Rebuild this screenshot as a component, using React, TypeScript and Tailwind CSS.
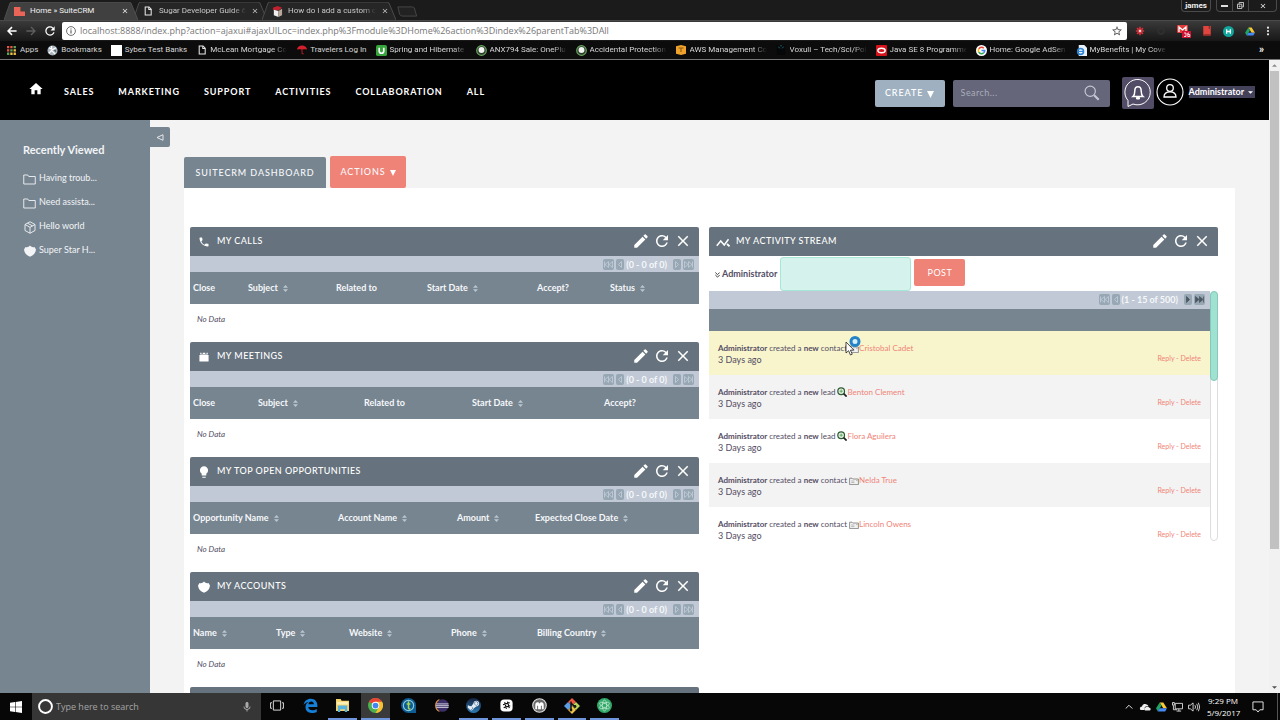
import React from "react";
import { MdEdit, MdRefresh, MdClose, MdPhone, MdLightbulb, MdHome, MdMic, MdStarBorder } from "react-icons/md";
import { FaSteamSymbol, FaSlack } from "react-icons/fa";

type IconProps = { className?: string };

/* ---------- Shared drawings ---------- */

const PageIcon = ({ className }: IconProps) => (
  <svg viewBox="0 0 10 12" className={className} fill="none" stroke="#e8e8e8" strokeWidth="1.3">
    <path d="M1.5 1h4.8L9 3.8V11H1.5z" />
    <path d="M6 1v3h3" />
  </svg>
);

const DriveIcon = ({ className }: IconProps) => (
  <svg viewBox="0 0 24 22" className={className}>
    <path d="M8 1h8l8 13h-8z" fill="#fcc934" />
    <path d="M8 1L0 14l4 7 8-13z" fill="#1fa463" />
    <path d="M8 14h16l-4 7H4z" fill="#4688f4" />
  </svg>
);

const ShieldIcon = ({ className }: IconProps) => (
  <svg viewBox="0 0 24 24" className={className} fill="currentColor">
    <path d="M12 1c3 3 5.500 4 9 2.800L24 9c-.8 7-4.500 11.500-12 14.500C4.500 20.500.8 16 0 9l3-5.200C6.500 5 9 4 12 1z" />
  </svg>
);

const FolderIcon = ({ className }: IconProps) => (
  <svg viewBox="0 0 26 22" className={className} fill="none" stroke="currentColor" strokeWidth="1.8">
    <path d="M1.500 20V2h8l2 3h13v15z" />
  </svg>
);

const CubeIcon = ({ className }: IconProps) => (
  <svg viewBox="0 0 24 26" className={className} fill="none" stroke="currentColor" strokeWidth="1.8" strokeLinejoin="round">
    <path d="M12 1.500l10 5.500v12l-10 5.500L2 19V7z" />
    <path d="M2 7l10 5.500L22 7M12 12.500v12M7 4.300l10 5.500" />
  </svg>
);

const CalendarIcon = ({ className }: IconProps) => (
  <svg viewBox="0 0 24 24" className={className} fill="currentColor">
    <path d="M1 7h22v15q0 1-1 1H2q-1 0-1-1z" />
    <path d="M3 2h3v3h3V2h6v3h3V2h3v4H3z" />
  </svg>
);

const ActivityIcon = ({ className }: IconProps) => (
  <svg viewBox="0 0 28 18" className={className} fill="none" stroke="currentColor" strokeWidth="3">
    <path d="M1.500 15.500L9.500 6l7 8L25 2.500" />
    <path d="M22 12l5 4.500" strokeWidth="3.5" />
  </svg>
);

const SortIcon = () => (
  <svg viewBox="0 0 10 14" className="h-[7px] w-[5px] shrink-0" fill="#b9c6d0">
    <path d="M5 0l5 5.500H0zM5 14L0 8.500h10z" />
  </svg>
);

const GoogleIcon = ({ className }: IconProps) => (
  <svg viewBox="0 0 24 24" className={className} fill="none" strokeWidth="3.4">
    <circle cx="12" cy="12" r="12" fill="#fff" />
    <path d="M17 7A7 7 0 0 0 6 8.500" stroke="#ea4335" />
    <path d="M6 8.500a7 7 0 0 0 0 7" stroke="#fbbc05" />
    <path d="M6 15.500A7 7 0 0 0 16.500 17.300" stroke="#34a853" />
    <path d="M12 12h7a7 7 0 0 1-2.500 5.300" stroke="#4285f4" />
  </svg>
);

const ChromeIcon = ({ className }: IconProps) => (
  <svg viewBox="0 0 24 24" className={className}>
    <circle cx="12" cy="12" r="12" fill="#4caf50" />
    <path d="M12 12L1.600 6A12 12 0 0 1 22.400 6z" fill="#ea4335" />
    <path d="M12 6h10.400A12 12 0 0 1 12 24l5.200-9z" fill="#fbc02d" />
    <circle cx="12" cy="12" r="6" fill="#fff" />
    <circle cx="12" cy="12" r="4.6" fill="#4285f4" />
  </svg>
);

const RingIcon = ({ className }: IconProps) => (
  <svg viewBox="0 0 24 24" className={className}>
    <circle cx="12" cy="12" r="10.5" fill="#2c3a2c" stroke="#69a85f" strokeWidth="2.5" />
    <circle cx="12" cy="11" r="6.5" fill="#f2f4f2" />
  </svg>
);

/* ---------- Browser ---------- */

const BrowserTab = ({ icon, title, active = false }: { icon: React.ReactNode; title: string; active?: boolean }) => (
  <div
    className={
      "relative flex h-[18px] w-[129px] shrink-0 items-center gap-[5px] pl-[9px] pr-1 " +
      (active ? "z-10 text-[#f2f2f2]" : "text-[#c8c8c8]")
    }
  >
    <svg viewBox="0 0 134 18" preserveAspectRatio="none" className="absolute inset-y-0 left-0 h-full w-[134px]">
      <path d="M0 18L6 1Q7 0 8 0H124Q126 0 127 1L134 18" fill={active ? "#404040" : "#262626"} stroke="#555" strokeWidth="0.8" />
    </svg>
    <span className="relative flex w-3 shrink-0 justify-center">{icon}</span>
    <span
      className={
        "relative shrink-0 whitespace-nowrap " +
        (active ? "" : "[mask-image:linear-gradient(to_right,black_85%,transparent)]")
      }
    >
      {title}
    </span>
    <button aria-label={`Close ${title}`} className="relative ml-auto">
      <MdClose className="size-2" />
    </button>
  </div>
);

const bookmarks: { title: string; icon: React.ReactNode; fade?: boolean }[] = [
  {
    title: "Apps",
    icon: (
      <svg viewBox="0 0 9 9" className="size-[9px]">
        <path d="M0 0h2.300v2.300H0zM3.300 0h2.300v2.300H3.300zM0 3.300h2.300v2.300H0z" fill="#e5564a" />
        <path d="M6.600 0h2.300v2.300H6.600zM3.300 3.300h2.300v2.300H3.300zM0 6.600h2.300v2.300H0z" fill="#5aa85a" />
        <path d="M6.600 3.300h2.300v2.300H6.600zM3.300 6.600h2.300v2.300H3.300zM6.600 6.600h2.300v2.300H6.600z" fill="#f0c04a" />
      </svg>
    ),
  },
  {
    title: "Bookmarks",
    icon: (
      <svg viewBox="0 0 12 12" className="size-[11px]">
        <circle cx="6" cy="6" r="5.5" fill="#a9b4bf" />
        <path d="M2 3l4 2 4-2M2 9l3-3 4 4M5 1v4" stroke="#fff" strokeWidth="1.3" fill="none" />
        <path d="M7 6l3-1v3z" fill="#55636f" />
      </svg>
    ),
  },
  { title: "Sybex Test Banks", icon: <span className="block size-[11px] bg-white" /> },
  { title: "McLean Mortgage Co", icon: <PageIcon className="h-[10px] w-2" />, fade: true },
  {
    title: "Travelers Log In",
    icon: (
      <svg viewBox="0 0 12 12" className="size-[10px]">
        <path d="M0 5.500A6 5 0 0 1 12 5.500L9 5 6 5.500 3 5z" fill="#d4202c" />
        <path d="M6 5v5.500h2" stroke="#d4202c" fill="none" />
      </svg>
    ),
  },
  {
    title: "Spring and Hibernate",
    icon: (
      <svg viewBox="0 0 12 12" className="size-[11px]">
        <rect width="12" height="12" rx="2" fill="#35a53c" />
        <path d="M3.500 3v3.500a2.500 2.500 0 0 0 5 0V3" stroke="#fff" strokeWidth="1.8" fill="none" />
      </svg>
    ),
    fade: true,
  },
  { title: "ANX794 Sale: OnePlus", icon: <RingIcon className="size-[11px]" />, fade: true },
  { title: "Accidental Protection", icon: <RingIcon className="size-[11px]" />, fade: true },
  {
    title: "AWS Management Co",
    icon: (
      <svg viewBox="0 0 12 12" className="size-[10px]">
        <path d="M0 1.500L6 0l6 1.500v9L6 12l-6-1.500z" fill="#f0a32c" />
        <path d="M3 3.500h6M6 3.500v5" stroke="#8a5a10" strokeWidth="1.3" />
      </svg>
    ),
    fade: true,
  },
  {
    title: "Voxuli – Tech/Sci/Polit",
    icon: (
      <svg viewBox="0 0 12 12" className="size-[10px]">
        <rect x="1" width="10" height="12" fill="#050709" />
        <path d="M3 2l1.500 2M9 2L7.500 4M5 1h2" stroke="#2d7a80" />
      </svg>
    ),
    fade: true,
  },
  {
    title: "Java SE 8 Programme",
    icon: (
      <svg viewBox="0 0 12 12" className="size-[11px]">
        <rect width="12" height="12" rx="1" fill="#d6131b" />
        <ellipse cx="6" cy="6" rx="4" ry="2.5" stroke="#fff" strokeWidth="1.6" fill="none" />
      </svg>
    ),
    fade: true,
  },
  { title: "Home: Google AdSen", icon: <GoogleIcon className="size-[11px]" />, fade: true },
  {
    title: "MyBenefits | My Cove",
    icon: (
      <svg viewBox="0 0 12 12" className="size-[11px]">
        <path d="M3 0h6l3 3v9H3z" fill="#e9f2fb" />
        <circle cx="5" cy="7" r="3.2" stroke="#2f86d6" strokeWidth="1.7" fill="none" />
        <path d="M2 7h6" stroke="#2f86d6" strokeWidth="1.2" />
      </svg>
    ),
    fade: true,
  },
];

const Browser = () => (
  <div className="shrink-0 bg-[#1b1b1b] font-[family-name:Roboto,sans-serif] text-[8px] leading-3 text-[#d6d6d6]">
    <div className="flex h-5 items-start justify-between">
      <div className="flex items-end self-end pl-1">
        <BrowserTab
          active
          title="Home » SuiteCRM"
          icon={
            <svg viewBox="0 0 12 12" className="size-[11px]">
              <path d="M0 1h7v5h5v5H0z" fill="#ea6557" />
            </svg>
          }
        />
        <BrowserTab title="Sugar Developer Guide 6" icon={<PageIcon className="h-[10px] w-2" />} />
        <BrowserTab
          title="How do I add a custom c"
          icon={
            <svg viewBox="0 0 12 12" className="size-[11px]">
              <path d="M1 2l5-2 5 2-4 3-6-1z" fill="#c3202f" />
              <path d="M2 4l5 1.500V12L2 10z" fill="#eee" />
              <path d="M7 5.500L11 3v7l-4 2z" fill="#b9a79a" />
            </svg>
          }
        />
        <button aria-label="New tab" className="ml-[5px] self-center">
          <svg viewBox="0 0 22 12" className="h-[11px] w-[22px]">
            <path d="M1 1h15q2 0 3 1l2.500 9H6q-2 0-3-2z" fill="#222" stroke="#4a4a4a" />
          </svg>
        </button>
      </div>
      <div className="flex h-3 items-stretch gap-[5px] pr-[3px] text-[#efefef]">
        <button className="w-[30px] rounded-b-sm border border-t-0 border-[#4a4a4a] font-bold leading-[10px]">james</button>
        <div className="flex w-[61px] items-stretch rounded-b-sm border border-t-0 border-[#4a4a4a]">
          <button aria-label="Minimize" className="flex flex-1 items-center justify-center">
            <span className="h-[2px] w-[7px] bg-[#ddd]" />
          </button>
          <button aria-label="Restore" className="flex flex-1 items-center justify-center border-x border-[#4a4a4a]">
            <svg viewBox="0 0 8 8" className="size-[7px]" fill="none" stroke="#ddd">
              <path d="M2.500 2V.5h5v5H6M.5 2.500h5v5h-5zM2.500 4.500h1v1h-1z" />
            </svg>
          </button>
          <button aria-label="Close" className="flex w-[27px] items-center justify-center">
            <MdClose className="size-2" />
          </button>
        </div>
      </div>
    </div>

    <div className="flex h-[21px] items-center border-t border-[#4a4a4a] bg-linear-to-b from-[#3a3a3a] to-[#181818] pl-[7px] pr-[10px]">
      <button aria-label="Back">
        <svg viewBox="0 0 12 12" className="size-[10px]" fill="none" stroke="#fff" strokeWidth="1.9">
          <path d="M11.500 6H1.500M6 1.300L1.300 6 6 10.700" />
        </svg>
      </button>
      <button aria-label="Forward" className="ml-[9px]">
        <svg viewBox="0 0 12 12" className="size-[10px]" fill="none" stroke="#5e5e5e" strokeWidth="1.6">
          <path d="M.5 6h10M6 1.300L10.700 6 6 10.700" />
        </svg>
      </button>
      <button aria-label="Reload" className="ml-[7px]">
        <MdRefresh className="size-[14px] text-white" />
      </button>
      <label className="ml-[5px] flex h-[18px] min-w-0 flex-1 items-center gap-1 rounded-[2px] bg-white px-1">
        <svg viewBox="0 0 12 12" className="size-[10px] shrink-0" fill="none" stroke="#555">
          <circle cx="6" cy="6" r="5.3" />
          <path d="M6 5.200V9M6 3v1.200" strokeWidth="1.3" />
        </svg>
        <input
          aria-label="Address"
          readOnly
          value="localhost:8888/index.php?action=ajaxui#ajaxUILoc=index.php%3Fmodule%3DHome%26action%3Dindex%26parentTab%3DAll"
          className="min-w-0 flex-1 bg-transparent font-[family-name:'Open_Sans',sans-serif] text-[9px] text-[#777] outline-none"
        />
        <MdStarBorder className="size-[12px] text-[#555]" />
      </label>
      <div className="flex items-center gap-[11px] pl-2">
        <svg viewBox="0 0 12 12" className="size-[10px]" stroke="#d5303a" strokeWidth="2">
          <path d="M6 1v10M1 6h10M2.500 2.500l7 7M9.500 2.500l-7 7" />
          <circle cx="6" cy="6" r="1" fill="#fff" stroke="#fff" strokeWidth="1" />
        </svg>
        <svg viewBox="0 0 12 12" className="size-[10px]" fill="none" stroke="#303030" strokeWidth="2">
          <circle cx="6" cy="6" r="3.5" />
        </svg>
        <svg viewBox="0 0 14 14" className="size-[14px]">
          <rect width="11" height="8" y="1" rx="1" fill="#e03a3a" />
          <path d="M2 8V3l3.500 3L9 3v5" stroke="#fff" strokeWidth="1.3" fill="none" />
          <rect x="5" y="7" width="9" height="7" fill="#cf1030" />
          <path d="M7 9h2v3.500H7M11.800 9h-1v3.500h2v-2h-2" stroke="#fff" strokeWidth="0.8" fill="none" />
        </svg>
        <svg viewBox="0 0 12 12" className="size-[10px]">
          <path d="M1.500 0h9v11h-9z" fill="#e0463f" />
          <path d="M1.500 10h9v2h-9zM8 0h1.500v4L8 3z" fill="#8f2a26" />
        </svg>
        <svg viewBox="0 0 12 12" className="size-[11px]">
          <circle cx="6" cy="6" r="6" fill="#12a59c" />
          <path d="M4 3.500v5M8 3.500v5M4 6h4" stroke="#fff" strokeWidth="1.4" />
        </svg>
        <DriveIcon className="h-[9px] w-[10px]" />
        <svg viewBox="0 0 4 12" className="h-[10px] w-1" fill="#eee">
          <circle cx="2" cy="2" r="1.3" />
          <circle cx="2" cy="6" r="1.3" />
          <circle cx="2" cy="10" r="1.3" />
        </svg>
      </div>
    </div>

    <nav aria-label="Bookmarks" className="flex h-[19px] items-center gap-[9px] border-b border-[#777] bg-[#0c0c0c] pl-[6px] pr-4">
      {bookmarks.map((b) => (
        <a key={b.title} href="#" className="flex shrink-0 items-center gap-[3px]">
          <span className="flex w-[11px] justify-center">{b.icon}</span>
          <span
            className={
              "block whitespace-nowrap " +
              (b.fade ? "w-[77px] [mask-image:linear-gradient(to_right,black_82%,transparent)]" : "")
            }
          >
            {b.title}
          </span>
        </a>
      ))}
      <button aria-label="More bookmarks" className="ml-auto text-[10px] font-bold text-white">
        »
      </button>
    </nav>
  </div>
);

/* ---------- Application header ---------- */

const menu = ["SALES", "MARKETING", "SUPPORT", "ACTIVITIES", "COLLABORATION", "ALL"];

const Header = () => (
  <header className="flex h-[60px] shrink-0 items-center bg-black pl-7 pr-[14px] pt-[6px] text-white">
    <a href="#" aria-label="Home" className="mr-5 pb-2">
      <MdHome className="size-4" />
    </a>
    <nav className="flex gap-6 pb-[3px] text-[9px] font-bold leading-4 tracking-widest">
      {menu.map((m) => (
        <a key={m} href="#">
          {m}
        </a>
      ))}
    </nav>
    <button className="ml-auto flex h-[27px] w-[70px] items-center justify-center gap-1 rounded-[2px] bg-[#9fb1c0] text-[9px] font-medium tracking-widest">
      CREATE
      <svg viewBox="0 0 8 8" className="mt-[2px] size-[7px]" fill="#fff">
        <path d="M0 0h8L4 8z" />
      </svg>
    </button>
    <div className="ml-2 flex h-[27px] w-[157px] items-center rounded-[2px] bg-[#65667a] px-2">
      <input
        aria-label="Search"
        placeholder="Search..."
        className="min-w-0 flex-1 bg-transparent text-[9px] tracking-wider outline-none placeholder:text-[#a9adba]"
      />
      <button aria-label="Run search" className="mr-[2px]">
        <svg viewBox="0 0 18 18" className="size-4" fill="none" stroke="#c5cad6">
          <circle cx="7" cy="7" r="5.8" strokeWidth="1.3" />
          <path d="M11.500 11.500l5 5" strokeWidth="2.4" />
        </svg>
      </button>
    </div>
    <button aria-label="Notifications" className="ml-3 flex size-8 items-center justify-center rounded-[2px] bg-[#524c66]">
      <svg viewBox="0 0 30 30" className="size-[30px]" fill="none" stroke="#fff">
        <path d="M5 28.500V22.500A12.700 12.700 0 1 1 10 26z" strokeWidth="1" />
        <path d="M10 18.500c1.800-1.500 1.800-3 1.800-5.500 0-2.500 1.200-4.200 3.200-4.200s3.200 1.700 3.200 4.200c0 2.500 0 4 1.800 5.500z" strokeWidth="1.5" />
        <path d="M13.500 19.500h3v1.500h-3z" fill="#fff" />
      </svg>
    </button>
    <button aria-label="Profile" className="ml-[2px] pb-[2px]">
      <svg viewBox="0 0 28 28" className="size-7" fill="none" stroke="#fff">
        <circle cx="14" cy="14" r="13" strokeWidth="1.1" />
        <circle cx="14" cy="10" r="3.3" strokeWidth="1.3" />
        <path d="M8 19c0-3.500 2.500-5.200 6-5.200s6 1.700 6 5.200z" strokeWidth="1.3" />
      </svg>
    </button>
    <button className="mb-[2px] ml-[5px] flex h-3 items-center gap-1 bg-[#44415a] pr-[2px] text-[9px] font-bold leading-3">
      Administrator
      <svg viewBox="0 0 6 3" className="h-[3px] w-[5px]" fill="#fff">
        <path d="M0 0h6L3 3z" />
      </svg>
    </button>
  </header>
);

/* ---------- Sidebar ---------- */

const recent = [
  { label: "Having troub...", icon: <FolderIcon className="h-[11px] w-[13px]" /> },
  { label: "Need assista...", icon: <FolderIcon className="h-[11px] w-[13px]" /> },
  { label: "Hello world", icon: <CubeIcon className="h-[13px] w-3" /> },
  { label: "Super Star H...", icon: <ShieldIcon className="size-3" /> },
];

const Sidebar = () => (
  <aside className="w-[150px] shrink-0 bg-[#778591] pl-[23px] pt-[22px] text-[#f2f4f6]">
    <h2 className="text-[11px] font-bold leading-[15px]">Recently Viewed</h2>
    <ul className="mt-[9px] text-[9px]">
      {recent.map((r) => (
        <li key={r.label}>
          <a href="#" className="flex h-6 items-center gap-[3px]">
            <span className="flex w-[13px] justify-center pt-[2px]">{r.icon}</span>
            {r.label}
          </a>
        </li>
      ))}
    </ul>
  </aside>
);

/* ---------- Dashlets ---------- */

const PagerButton = ({ label, on, wide, flip }: { label: string; on?: boolean; wide?: boolean; flip?: boolean }) => (
  <button
    aria-label={label}
    disabled={!on}
    className={
      "flex h-[11px] items-center justify-center rounded-[2px] bg-[#98a7b4] " + (wide ? "w-[11px]" : "w-2")
    }
  >
    <svg
      viewBox={wide ? "0 0 9 7" : "0 0 4 7"}
      className={(wide ? "h-[7px] w-[9px]" : "h-[7px] w-1") + (flip ? " rotate-180" : "")}
      fill={on ? "#4b5863" : "none"}
      stroke={on ? "#4b5863" : "#c3ced8"}
      strokeWidth="0.8"
    >
      {wide ? <path d="M.5 .5L4 3.500 .5 6.500zM4.500 .5L8 3.500 4.500 6.500zM8.500 .5v6" /> : <path d="M.5 .5L3.500 3.500 .5 6.500z" />}
    </svg>
  </button>
);

const Pager = ({ text, more = false }: { text: string; more?: boolean }) => (
  <div
    className={
      "flex items-center justify-end bg-[#c0c9d5] pr-[5px] text-[9px] font-bold text-[#f6f8fa] " +
      (more ? "h-[18px] pb-[2px]" : "h-4")
    }
  >
    <div className="flex items-center gap-[2px]">
      <PagerButton label="First page" wide flip />
      <PagerButton label="Previous page" flip />
      <span className="mr-1 whitespace-nowrap leading-[11px]">{text}</span>
      <PagerButton label="Next page" on={more} />
      <PagerButton label="Last page" wide on={more} />
    </div>
  </div>
);

const PanelHeader = ({ icon, title }: { icon: React.ReactNode; title: string }) => (
  <div className="flex h-[29px] items-center rounded-t-[2px] bg-[#66727d] pb-px pl-[6px] pr-[7px] text-white">
    <span className="mr-[6px] flex w-[15px] justify-center pt-[2px]">{icon}</span>
    <h3 className="text-[9px] font-medium leading-4 tracking-wider">{title}</h3>
    <div className="ml-auto flex gap-[3px]">
      <button aria-label={`Edit ${title}`}>
        <MdEdit className="size-[18px]" />
      </button>
      <button aria-label={`Refresh ${title}`}>
        <MdRefresh className="size-[18px]" />
      </button>
      <button aria-label={`Remove ${title}`}>
        <MdClose className="size-[18px]" />
      </button>
    </div>
  </div>
);

type Column = { name: string; width: string; sort?: boolean };

const Dashlet = ({ icon, title, columns }: { icon: React.ReactNode; title: string; columns: Column[] }) => (
  <section>
    <PanelHeader icon={icon} title={title} />
    <Pager text="(0 - 0 of 0)" />
    <table className="w-full table-fixed text-left">
      <thead className="bg-[#778591] text-[9px] text-[#f6f8fa]">
        <tr className="h-8">
          {columns.map((c) => (
            <th key={c.name} scope="col" className={"pl-[3px] font-bold " + c.width}>
              <span className="flex items-center gap-[5px] whitespace-nowrap">
                {c.name}
                {c.sort && <SortIcon />}
              </span>
            </th>
          ))}
        </tr>
      </thead>
      <tbody>
        <tr className="h-[38px]">
          <td colSpan={columns.length} className="pb-2 pl-[7px] align-middle text-[8px] italic leading-3 text-[#534d64]">
            No Data
          </td>
        </tr>
      </tbody>
    </table>
  </section>
);

const dashlets: { title: string; icon: React.ReactNode; columns: Column[] }[] = [
  {
    title: "MY CALLS",
    icon: <MdPhone className="size-3" />,
    columns: [
      { name: "Close", width: "w-[55px]" },
      { name: "Subject", width: "w-[88px]", sort: true },
      { name: "Related to", width: "w-[91px]" },
      { name: "Start Date", width: "w-[110px]", sort: true },
      { name: "Accept?", width: "w-[73px]" },
      { name: "Status", width: "w-auto", sort: true },
    ],
  },
  {
    title: "MY MEETINGS",
    icon: <CalendarIcon className="size-[10px]" />,
    columns: [
      { name: "Close", width: "w-[65px]" },
      { name: "Subject", width: "w-[106px]", sort: true },
      { name: "Related to", width: "w-[108px]" },
      { name: "Start Date", width: "w-[132px]", sort: true },
      { name: "Accept?", width: "w-auto" },
    ],
  },
  {
    title: "MY TOP OPEN OPPORTUNITIES",
    icon: <MdLightbulb className="size-[14px]" />,
    columns: [
      { name: "Opportunity Name", width: "w-[145px]", sort: true },
      { name: "Account Name", width: "w-[119px]", sort: true },
      { name: "Amount", width: "w-[78px]", sort: true },
      { name: "Expected Close Date", width: "w-auto", sort: true },
    ],
  },
  {
    title: "MY ACCOUNTS",
    icon: <ShieldIcon className="size-3" />,
    columns: [
      { name: "Name", width: "w-[83px]", sort: true },
      { name: "Type", width: "w-[73px]", sort: true },
      { name: "Website", width: "w-[102px]", sort: true },
      { name: "Phone", width: "w-[86px]", sort: true },
      { name: "Billing Country", width: "w-auto", sort: true },
    ],
  },
];

const feed = [
  { kind: "contact", name: "Cristobal Cadet" },
  { kind: "lead", name: "Benton Clement" },
  { kind: "lead", name: "Flora Aguilera" },
  { kind: "contact", name: "Nelda True" },
  { kind: "contact", name: "Lincoln Owens" },
];

const KindIcon = ({ kind }: { kind: string }) =>
  kind === "lead" ? (
    <svg viewBox="0 0 12 12" className="ml-[2px] mt-px size-[10px]">
      <circle cx="5" cy="5" r="4" fill="#e8f2e4" stroke="#2c5d33" strokeWidth="1.5" />
      <path d="M3 5h4M5 3v4" stroke="#4f9a55" />
      <path d="M8 8l3.500 3.500" stroke="#222" strokeWidth="2" />
    </svg>
  ) : (
    <svg viewBox="0 0 12 10" className="ml-[2px] mt-[2px] h-2 w-[10px]" fill="#f2f2f2" stroke="#777">
      <path d="M.5 9.500v-8h3l1 1h7v7z" />
      <path d="M2.500 5h4M2.500 7h4M8.500 4.500h2" stroke="#999" strokeWidth="0.8" />
    </svg>
  );

const BusyPointer = () => (
  <svg viewBox="0 0 16 20" className="pointer-events-none absolute -left-[2px] -top-[7px] h-5 w-4">
    <circle cx="10" cy="5.5" r="4" fill="#d8ecf9" stroke="#2383c6" strokeWidth="3" />
    <path d="M1 6v11l2.600-2.300L5.400 19l1.900-.8-1.900-4L8.800 14z" fill="#fff" stroke="#222" strokeWidth="0.8" />
  </svg>
);

const ActivityStream = () => (
  <section className="text-[#534d64]">
    <PanelHeader icon={<ActivityIcon className="h-[9px] w-[14px]" />} title="MY ACTIVITY STREAM" />
    <form className="flex h-[35px] items-center pl-[6px]">
      <svg viewBox="0 0 7 8" className="mr-[2px] mt-[2px] h-[6px] w-[5px]" fill="none" stroke="#333">
        <path d="M.5 .5L3.500 3.500 6.500 .5M.5 4L3.500 7 6.500 4" strokeWidth="1.3" />
      </svg>
      <label htmlFor="status" className="mr-[3px] text-[9px] font-bold">
        Administrator
      </label>
      <input id="status" className="h-[34px] w-[131px] rounded-[3px] border border-[#a5e8d6] bg-[#d6f2ec] px-2 text-[9px] outline-none" />
      <button type="button" className="mb-[2px] ml-[3px] h-[27px] w-[51px] rounded-[2px] bg-[#f08377] text-[9px] tracking-wider text-white">
        POST
      </button>
    </form>
    <div className="flex h-[250px]">
      <div className="min-w-0 flex-1 overflow-hidden">
        <Pager text="(1 - 15 of 500)" more />
        <div className="h-[22px] bg-[#778591]" />
        <ul>
          {feed.map((f, i) => (
            <li
              key={f.name}
              className={
                "flex h-11 items-center justify-between pl-[9px] pr-[9px] pt-px " +
                (i === 0 ? "bg-[#f8f5cd]" : i % 2 ? "bg-[#f3f3f3]" : "bg-white")
              }
            >
              <div>
                <p className="flex items-center text-[8px] leading-3">
                  <span>
                    <b>Administrator</b> created a <b>new</b> {f.kind}
                  </span>
                  <span className="relative">
                    <KindIcon kind={f.kind} />
                    {i === 0 && <BusyPointer />}
                  </span>
                  <a href="#" className="text-[#f08377]">
                    {f.name}
                  </a>
                </p>
                <p className="text-[9px] leading-3">3 Days ago</p>
              </div>
              <p className="pt-[9px] text-[7px] leading-3 text-[#f08377]">
                <a href="#">Reply</a> - <a href="#">Delete</a>
              </p>
            </li>
          ))}
        </ul>
      </div>
      <div className="w-2 shrink-0 rounded-full border border-[#ddd] bg-white">
        <div className="-mx-px -mt-px h-[90px] rounded-full border border-[#86c9b8] bg-[#9fe2d1]" />
      </div>
    </div>
  </section>
);

const Dashboard = () => (
  <main className="flex min-h-0 min-w-0 flex-1 bg-[#f3f3f3]">
    <button aria-label="Collapse sidebar" className="mt-[7px] flex h-5 w-5 shrink-0 items-center justify-center rounded-r-[2px] bg-[#778591]">
      <svg viewBox="0 0 8 7" className="h-[7px] w-2" fill="none" stroke="#e3e7ea">
        <path d="M7 .7v5.600L1 3.500z" />
      </svg>
    </button>
    <div className="ml-[14px] mr-[34px] flex min-w-0 flex-1 flex-col pt-9">
      <div className="flex items-end gap-1 text-[9px] font-medium tracking-widest text-[#f6f8fa]">
        <button className="h-[31px] w-[142px] rounded-t-[2px] bg-[#778591]">SUITECRM DASHBOARD</button>
        <button className="flex h-8 w-[76px] items-center justify-center gap-1 rounded-[2px] bg-[#f08377]">
          ACTIONS
          <svg viewBox="0 0 8 8" className="mt-[2px] size-[6px]" fill="#fff">
            <path d="M0 0h8L4 8z" />
          </svg>
        </button>
      </div>
      <div className="grid min-h-0 flex-1 grid-cols-2 items-start gap-[10px] overflow-hidden bg-white pl-[6px] pr-[17px] pt-[39px]">
        <div>
          {dashlets.map((d) => (
            <Dashlet key={d.title} {...d} />
          ))}
          <div className="h-[29px] rounded-t-[2px] bg-[#66727d]" />
        </div>
        <ActivityStream />
      </div>
    </div>
  </main>
);

const Scrollbar = () => (
  <div className="flex w-[11px] shrink-0 flex-col items-center justify-between bg-[#f1f1f1] py-1">
    <svg viewBox="0 0 6 3" className="h-[3px] w-[5px] shrink-0" fill="#8a8a8a">
      <path d="M0 3h6L3 0z" />
    </svg>
    <div className="mt-1 h-[478px] w-[9px] shrink-0 bg-[#c1c1c1]" />
    <div className="flex-1" />
    <svg viewBox="0 0 6 3" className="h-[3px] w-[5px] shrink-0" fill="#505050">
      <path d="M0 0h6L3 3z" />
    </svg>
  </div>
);

/* ---------- Taskbar ---------- */

const tasks: { name: string; icon: React.ReactNode; open?: boolean; active?: boolean }[] = [
  {
    name: "Task view",
    icon: (
      <svg viewBox="0 0 15 12" className="h-[11px] w-[14px]" fill="none" stroke="#eee">
        <path d="M3.500 1h8v10h-8zM2 3H.5v6H2M13 3h1.500v6H13" />
      </svg>
    ),
  },
  {
    name: "Edge",
    icon: (
      <svg viewBox="0 0 24 24" className="size-[15px]" fill="#1680d8">
        <path d="M1 11C2 4.500 6.500 1 12.500 1 19 1 23 5.500 23 12v2.500H8.500c.2 3.500 3 5 6.500 5 2.700 0 5-.8 7-2v5C20 23.500 17 24 14 24 7.500 24 4 20 4 14.500c0-3.500 1.800-6.300 4.800-8C5.500 7 3 8.500 1 11zm7.700-1h8.600c0-2.800-1.500-4.300-4.200-4.300-2.500 0-4 1.600-4.400 4.300z" />
      </svg>
    ),
  },
  {
    name: "File Explorer",
    open: true,
    icon: (
      <svg viewBox="0 0 16 14" className="h-[13px] w-[15px]">
        <path d="M1 0h5l1 2h8v11H1z" fill="#f5d36b" />
        <path d="M2 3h12v3H2z" fill="#fbeeb5" />
        <path d="M3 7h10v7h-2.500v-3h-5v3H3z" fill="#55b1e0" />
      </svg>
    ),
  },
  { name: "Chrome", open: true, active: true, icon: <ChromeIcon className="size-[15px]" /> },
  {
    name: "TextPad",
    icon: (
      <svg viewBox="0 0 16 16" className="size-[15px]">
        <path d="M8 0a8 8 0 0 1 8 8v8H8A8 8 0 0 1 8 0z" fill="#0e5c94" />
        <circle cx="8" cy="8" r="5.5" fill="none" stroke="#8cc9dd" strokeWidth="1.2" />
        <path d="M8 3.500v7q0 1.500 2 1M6 6.500h4" stroke="#a8d64c" strokeWidth="1.6" fill="none" />
      </svg>
    ),
  },
  {
    name: "Eclipse",
    icon: (
      <svg viewBox="0 0 16 16" className="size-[15px]">
        <path d="M6 1a7.500 7.500 0 0 0 0 14L3.500 8z" fill="#ee9a3a" />
        <circle cx="9" cy="8" r="6.7" fill="#3a2f66" />
        <path d="M2.500 6.300h13M2.200 8.200h13.600M2.500 10h13" stroke="#e8e6f2" strokeWidth="0.9" />
      </svg>
    ),
  },
  {
    name: "Steam",
    open: true,
    icon: (
      <span className="flex size-[15px] items-center justify-center rounded-full bg-linear-to-b from-[#13233f] to-[#2d7db5]">
        <FaSteamSymbol className="size-[13px] text-[#e6eef5]" />
      </span>
    ),
  },
  {
    name: "Slack",
    open: true,
    icon: (
      <svg viewBox="0 0 16 16" className="size-[15px]">
        <rect x="1.5" y="1.5" width="13" height="13" rx="4" fill="#fff" />
        <path d="M6 4.500l2 7M9 3.800l2 7M4.300 7l7-2M5 10.300l7-2" stroke="#111" strokeWidth="1.3" fill="none" />
      </svg>
    ),
  },
  {
    name: "MAMP",
    open: true,
    icon: (
      <svg viewBox="0 0 16 16" className="size-[15px]">
        <circle cx="8" cy="8" r="7.2" fill="#6a6a6a" stroke="#ddd" strokeWidth="1.2" />
        <path d="M3.500 12V7.500C3.500 4 7 4 8 6c1-2 4.500-2 4.500 1.500V12h-2V8.500q-.5-1-1 0V12h-3V8.500q-.5-1-1 0V12z" fill="#fff" />
      </svg>
    ),
  },
  {
    name: "Git",
    open: true,
    icon: (
      <svg viewBox="0 0 16 16" className="size-4">
        <path d="M8 0l4 4-4 4-4-4z" fill="#ee5a43" />
        <path d="M4 4l4 4-4 4-4-4z" fill="#5c9ce0" />
        <path d="M12 4l4 4-4 4-4-4z" fill="#b8d65b" />
        <path d="M8 8l4 4-4 4-4-4z" fill="#f2c448" />
        <path d="M7 3.500v9M7 5l4 4" stroke="#151515" strokeWidth="1.5" />
        <circle cx="7" cy="12" r="1.4" fill="#151515" />
        <circle cx="11" cy="8.5" r="1.4" fill="#151515" />
      </svg>
    ),
  },
  {
    name: "Atom",
    open: true,
    icon: (
      <svg viewBox="0 0 16 16" className="size-[15px]">
        <circle cx="8" cy="8" r="8" fill="#32a869" />
        <g fill="none" stroke="#d3f0df" strokeWidth="0.7">
          <ellipse cx="8" cy="8" rx="2.3" ry="5.8" />
          <ellipse cx="8" cy="8" rx="2.3" ry="5.8" transform="rotate(60 8 8)" />
          <ellipse cx="8" cy="8" rx="2.3" ry="5.8" transform="rotate(120 8 8)" />
        </g>
      </svg>
    ),
  },
];

const Taskbar = () => (
  <footer className="flex h-[27px] shrink-0 items-stretch bg-[#070707] font-[family-name:'Open_Sans',sans-serif] text-white">
    <button aria-label="Start" className="flex w-8 items-center justify-center">
      <svg viewBox="0 0 12 12" className="size-3" fill="#fff">
        <path d="M0 1.700l5-.7v4.700H0zM5.600 .9L12 0v5.700H5.600zM0 6.300h5V11l-5-.7zM5.600 6.300H12V12l-6.400-.9z" />
      </svg>
    </button>
    <label className="flex w-[229px] items-center gap-[3px] bg-[#363636] pl-[6px] pr-2">
      <svg viewBox="0 0 14 14" className="size-[15px]" fill="none" stroke="#fff" strokeWidth="1.8">
        <circle cx="7" cy="7" r="6" />
      </svg>
      <input
        aria-label="Taskbar search"
        placeholder="Type here to search"
        className="min-w-0 flex-1 bg-transparent text-[9px] outline-none placeholder:text-[#a5a5a5]"
      />
      <MdMic className="size-3 text-[#aaa]" />
    </label>
    <div className="flex w-[360px]">
      {tasks.map((t) => (
        <button
          key={t.name}
          aria-label={t.name}
          className={
            "mx-[2px] flex flex-1 items-center justify-center border-b-2 " +
            (t.open ? "border-[#6f95dc] " : "border-transparent ") +
            (t.active ? "bg-[#3a3a3a]" : "")
          }
        >
          {t.icon}
        </button>
      ))}
    </div>
    <div className="ml-auto mr-[2px] flex items-center gap-[5px] border-r border-[#555] pr-[13px]">
      <svg viewBox="0 0 9 6" className="mr-px h-[5px] w-2" fill="none" stroke="#ddd" strokeWidth="1.2">
        <path d="M.5 5.500l4-4 4 4" />
      </svg>
      <svg viewBox="0 0 14 9" className="h-2 w-3" fill="#eee">
        <path d="M1 6.500A2.500 2.500 0 0 1 3.500 4 3.500 3.500 0 0 1 9.500 2 2 2 0 0 1 11 3.500C8 3 6 4.500 6 8H2.500A1.500 1.500 0 0 1 1 6.500zM7 8.500A2.300 2.300 0 0 1 7.500 5 3 3 0 0 1 12 5.500a1.600 1.600 0 0 1 0 3.200z" />
      </svg>
      <DriveIcon className="h-[10px] w-[11px]" />
      <svg viewBox="0 0 12 11" className="h-[10px] w-[11px]" fill="none" stroke="#ddd">
        <path d="M3.500 1.500h8v6h-8zM5 10h5M7.500 7.500V10M.5 .5h2v3h-2zM1.500 4v4.500h4" />
      </svg>
      <svg viewBox="0 0 13 11" className="h-[10px] w-3" fill="none" stroke="#ddd">
        <path d="M.5 3.500h2l3-2.500v9l-3-2.500h-2zM7.500 3.500q1.500 2 0 4M9.500 2q2.500 3.500 0 7M11.300 .8q3 4.700 0 9.400" />
      </svg>
      <time className="ml-[2px] block w-8 whitespace-nowrap text-center text-[8px] leading-3">
        9:29 PM
        <br />
        5/9/2017
      </time>
      <button aria-label="Notifications centre" className="ml-2">
        <svg viewBox="0 0 13 13" className="size-3" fill="none" stroke="#eee">
          <path d="M1 1h11v8.500H8.500L6.500 12l-2-2.500H1z" />
        </svg>
      </button>
    </div>
  </footer>
);

export default function App() {
  return (
    <div className="flex h-screen flex-col overflow-hidden font-[family-name:Lato,sans-serif]">
      <Browser />
      <div className="flex min-h-0 flex-1">
        <div className="flex min-w-0 flex-1 flex-col">
          <Header />
          <div className="flex min-h-0 flex-1">
            <Sidebar />
            <Dashboard />
          </div>
        </div>
        <Scrollbar />
      </div>
      <Taskbar />
    </div>
  );
}
